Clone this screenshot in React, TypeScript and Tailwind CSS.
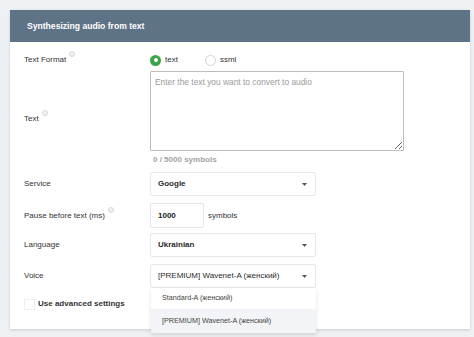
import React from 'react'

function Help() {
  return (
    <span className="ml-[3px] -mt-[3px] inline-block h-[6px] w-[6px] rounded-full border border-[#d4d7db] bg-[#f1f2f4] align-top" />
  )
}

function Caret() {
  return (
    <svg width="5" height="3" viewBox="0 0 5 3" className="shrink-0">
      <polygon points="0,0 5,0 2.5,3" fill="#555" />
    </svg>
  )
}

function Row({ label, help, children, className = '' }: { label: string; help?: boolean; children: React.ReactNode; className?: string }) {
  return (
    <div className={`flex items-center ${className}`}>
      <div className="w-[126px] shrink-0 text-[8px] text-[#333]">
        {label}
        {help && <Help />}
      </div>
      {children}
    </div>
  )
}

function Select({ value, bold = true }: { value: string; bold?: boolean }) {
  return (
    <div className="flex h-[24px] w-[166px] items-center justify-between rounded-[2px] border border-[#e6e8eb] bg-white pl-[7px] pr-[8px]">
      <span className={`text-[8px] text-[#2b2b2b] ${bold ? 'font-bold' : ''}`}>{value}</span>
      <Caret />
    </div>
  )
}

export default function App() {
  return (
    <div className="h-[337px] w-[474px] bg-[#eef1f4] pl-[10px] pt-[10px] font-['Liberation_Sans',Arial,sans-serif]">
      <div className="relative h-[319px] w-[460px] bg-white shadow-[0_1px_3px_rgba(0,0,0,0.15)]">
        <div className="flex h-[32px] items-center bg-[#5f7387] pl-[17px] text-[8.6px] font-bold text-white">
          Synthesizing audio from text
        </div>

        <div className="pl-[14px]">
          <Row label="Text Format" help className="mt-[11px] h-[14px]">
            <div className="flex items-center text-[8px] text-[#333]">
              <span className="flex h-[11px] w-[11px] items-center justify-center rounded-full bg-[#3aa648]">
                <span className="h-[4px] w-[4px] rounded-full bg-white" />
              </span>
              <span className="ml-[4px]">text</span>
              <span className="ml-[27px] h-[11px] w-[11px] rounded-full border border-[#cfd2d6] bg-white" />
              <span className="ml-[4px]">ssml</span>
            </div>
          </Row>

          <Row label="Text" help className="mt-[4px]">
            <div className="flex flex-col">
              <textarea
                placeholder="Enter the text you want to convert to audio"
                className="block h-[80px] w-[254px] rounded-[1px] border border-[#bdbdbd] px-[4px] py-[4px] text-[8.4px] text-[#333] outline-none placeholder:text-[#9a9a9a]"
              />
              <div className="ml-[3px] mt-[2px] h-[13px] text-[8px] font-bold leading-[13px] text-[#a3a3a3]">0 / 5000 symbols</div>
            </div>
          </Row>

          <Row label="Service" className="mt-[6px]">
            <Select value="Google" />
          </Row>

          <Row label="Pause before text (ms)" help className="mt-[7px]">
            <div className="flex h-[25px] w-[54px] items-center rounded-[2px] border border-[#e3e5e8] pl-[7px] text-[8px] font-bold text-[#222]">
              1000
            </div>
            <span className="ml-[4px] text-[8px] text-[#333]">symbols</span>
          </Row>

          <Row label="Language" className="mt-[5px]">
            <Select value="Ukrainian" />
          </Row>

          <Row label="Voice" className="mt-[7px]">
            <Select value="[PREMIUM] Wavenet-A (женский)" bold={false} />
          </Row>

          <div className="mt-[10px] flex items-center">
            <span className="h-[11px] w-[11px] border border-[#eceef0] bg-white" />
            <span className="ml-[3px] text-[8px] font-bold text-[#333]">Use advanced settings</span>
          </div>
        </div>

        <div className="absolute left-[141px] top-[278px] z-10 w-[165px] bg-white shadow-[0_2px_4px_rgba(0,0,0,0.12)]">
          <div className="flex h-[21px] items-center pl-[11px] text-[7.2px] text-[#444]">Standard-A (женский)</div>
          <div className="flex h-[24px] items-center bg-[#f2f4f7] pl-[11px] text-[7.2px] text-[#444]">[PREMIUM] Wavenet-A (женский)</div>
        </div>
      </div>
    </div>
  )
}
